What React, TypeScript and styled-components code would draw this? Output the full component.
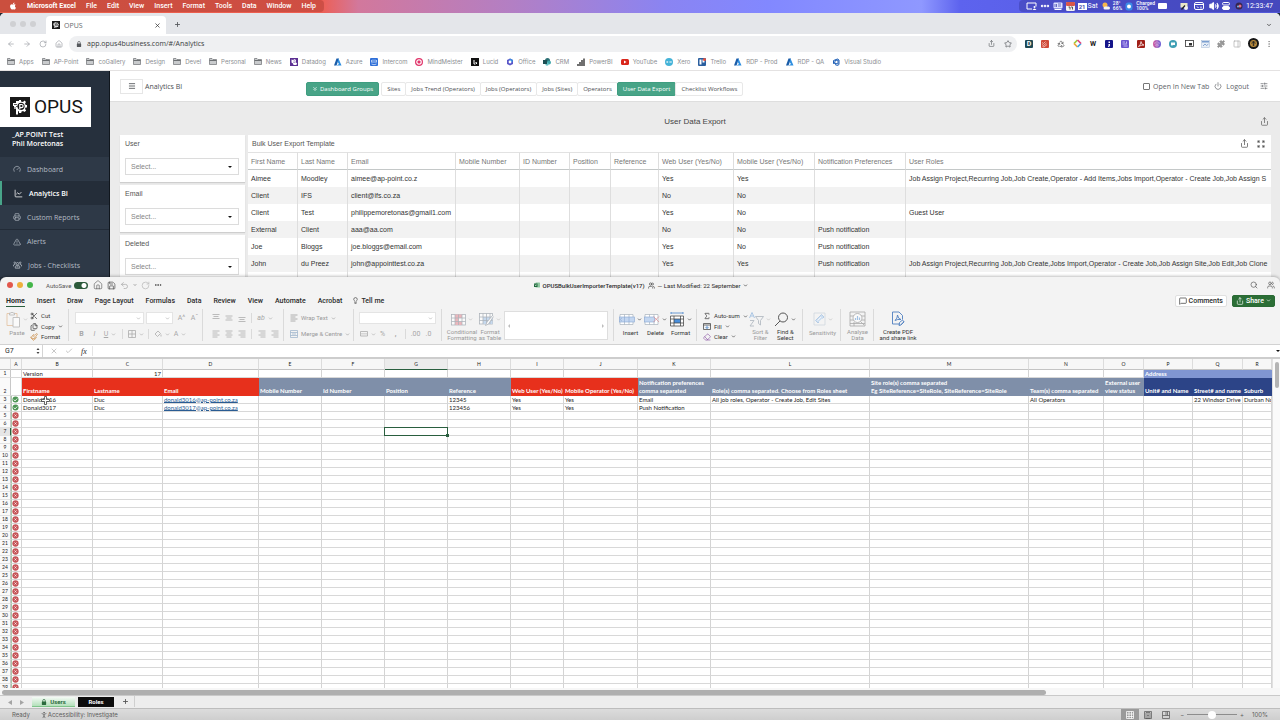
import React from "react";
import styled, { createGlobalStyle, css } from "styled-components";
import {
  ArrowLeft, ArrowRight, RotateCw, House, Star, Share, Puzzle, PanelRight, EllipsisVertical,
  Menu, Power, SlidersHorizontal, ChevronDown, ChevronsDown, Search, Scissors, ChartLine, Printer,
  TriangleAlert, Users, Gauge, Lightbulb, Undo2, Plus, X, Check, MessageSquare, Sigma, Eraser,
  Recycle, Volume2, PersonStanding, Paintbrush, Files, Ellipsis, Save,
} from "lucide-react";
import { FaApple } from "react-icons/fa";

const ui = `Roboto, "Liberation Sans", sans-serif`;
const web = `"Open Sans", "Noto Sans", sans-serif`;
const helv = `"Liberation Sans", Arial, sans-serif`;
const calibri = `Lato, "Open Sans", sans-serif`;

const Global = createGlobalStyle`
  *, *::before, *::after { box-sizing: border-box; }
  html, body, #root { height: 100%; }
  body { margin: 0; overflow: hidden; background: #1f2a36; font-family: ${ui}; }
  button, input, select { font: inherit; color: inherit; border: 0; background: none; padding: 0; margin: 0; border-radius: 0; }
  a { color: inherit; text-decoration: none; }
  svg { display: block; flex: none; }
  h1, h2, p { margin: 0; font: inherit; }
`;

const Desktop = styled.div`
  display: flex;
  flex-direction: column;
  height: 100vh;
  min-height: 400px;
`;

/* ---------- macOS menu bar ---------- */

const MenuBar = styled.header`
  display: flex;
  justify-content: space-between;
  height: 13px;
  flex: none;
  color: #fff;
  font-size: 7px;
  line-height: 12px;
  background: linear-gradient(90deg, #e8604a 0%, #ee5e52 25%, #d2789c 28%, #b37fc4 40%, #8a84f2 52%, #8288ff 60%, #8f98ff 72%, #5d63ee 75%, #5258d8 100%);
`;
const AppMenus = styled.nav`
  display: flex;
  gap: 10px;
  padding: 0 8px 0 9px;
  height: 12px;
  border-radius: 0 4px 4px 0;
  background: rgba(150, 50, 40, 0.35);
  font-weight: 500;
  b { font-weight: 700; }
  svg { margin-top: 2px; }
`;
const StatusMenus = styled.div`
  display: flex;
  align-items: center;
  gap: 3px;
  padding: 0 7px;
  height: 12px;
  border-radius: 4px 0 0 4px;
  background: rgba(50, 50, 150, 0.4);
`;
const TinyStack = styled.span`
  display: block;
  font-size: 5px;
  line-height: 5px;
  font-weight: 500;
`;
const DateChip = styled.span`
  display: flex;
  align-items: center;
  gap: 1px;
  line-height: 8px;
  b { background: #fff; color: #4a50b0; font-size: 6px; line-height: 7px; padding: 0 1px; }
`;

/* ---------- Browser ---------- */

const Browser = styled.section`
  display: flex;
  flex-direction: column;
  height: 270px;
  flex: none;
  overflow: hidden;
  border-radius: 5px 5px 0 0;
  background: #fff;
`;
const TabStrip = styled.div`
  display: flex;
  align-items: flex-end;
  height: 21px;
  flex: none;
  padding: 0 8px 0 10px;
  background: #e4e6ea;
`;
const Lights = styled.div`
  display: flex;
  align-self: center;
  gap: 4px;
`;
const Light = styled.button<{ $c: string }>`
  width: 6px;
  height: 6px;
  border-radius: 50%;
  background: ${(p) => p.$c};
`;
const BrowserTab = styled.div`
  display: flex;
  align-items: center;
  gap: 4px;
  width: 120px;
  height: 18px;
  margin-left: 10px;
  padding: 0 5px 0 6px;
  border-radius: 4px 4px 0 0;
  background: #fff;
  color: #66696d;
  font: 7px ${web};
  button { margin-left: auto; }
`;
const NewTab = styled.button`
  margin: 0 auto 6px 8px;
  color: #55585c;
`;
const TabSearch = styled.button`
  margin-bottom: 6px;
  color: #333;
`;
const NavRow = styled.div`
  display: flex;
  align-items: center;
  height: 19px;
  flex: none;
  padding: 0 3px;
`;
const NavButtons = styled.div`
  display: flex;
  gap: 8px;
  width: 66px;
  padding-left: 4px;
  color: #9b9fa4;
`;
const Omnibox = styled.div`
  display: flex;
  align-items: center;
  gap: 5px;
  flex: 1;
  height: 16px;
  padding: 0 4px 0 7px;
  border-radius: 8px;
  background: #eff0f2;
  color: #55585c;
  input { flex: 1; min-width: 0; font: 7px ${web}; color: #3a3d40; outline: none; }
  button { width: 11px; display: grid; place-items: center; }
`;
const Extensions = styled.div`
  display: grid;
  grid-auto-flow: column;
  grid-auto-columns: 16px;
  margin-left: 4px;
  button { display: grid; place-items: center; height: 16px; color: #888; }
`;
const ExtTile = styled.span<{ $bg: string; $fg?: string; $round?: boolean }>`
  display: block;
  width: 8px;
  height: 8px;
  border-radius: ${(p) => (p.$round ? "50%" : "1px")};
  background: ${(p) => p.$bg};
  color: ${(p) => p.$fg || "#fff"};
  font-size: 7px;
  font-weight: 700;
  line-height: 8px;
  text-align: center;
`;
const Avatar = styled.span`
  display: grid;
  place-items: center;
  width: 11px;
  height: 11px;
  border-radius: 50%;
  border: 2px solid #151515;
  background: #b98a3a;
`;
const Bookmarks = styled.nav`
  display: flex;
  align-items: center;
  gap: 8px;
  height: 18px;
  flex: none;
  padding: 0 7px;
  border-bottom: 1px solid #e4e2e2;
  color: #8b8e92;
  font: 6px Inter, ${ui};
  white-space: nowrap;
  a { display: flex; align-items: center; gap: 4px; }
`;

/* ---------- Web application ---------- */

const WebApp = styled.div`
  display: flex;
  flex: 1;
  min-height: 0;
`;
const Sidebar = styled.aside`
  width: 110px;
  flex: none;
  padding-top: 16px;
  border-right: 1px solid #10161d;
  background: #26303d;
  font-family: ${web};
`;
const Brand = styled.div`
  display: flex;
  align-items: center;
  gap: 4px;
  width: 91px;
  height: 40px;
  padding-left: 10px;
  background: #fff;
  color: #151515;
  font: 19px/40px ${ui};
`;
const Account = styled.div`
  height: 30px;
  padding: 3px 0 0 12px;
  color: #fff;
  font-size: 7px;
  line-height: 9px;
  font-weight: 600;
`;
const SideLink = styled.a<{ $active?: boolean; $sep?: boolean }>`
  display: flex;
  align-items: center;
  gap: 6px;
  height: 24px;
  padding-left: ${(p) => (p.$active ? "12px" : "13px")};
  border-left: ${(p) => (p.$active ? "2px solid #48a489" : "0")};
  border-top: ${(p) => (p.$sep ? "1px solid #222b37" : "0")};
  background: ${(p) => (p.$active ? "#242d39" : "#2e3947")};
  color: ${(p) => (p.$active ? "#fff" : "#b4bbc4")};
  font-size: 7px;
  font-weight: ${(p) => (p.$active ? 600 : 500)};
`;
const Main = styled.main`
  display: flex;
  flex-direction: column;
  flex: 1;
  min-width: 0;
  background: #ebebeb;
`;
const TopBar = styled.div`
  display: flex;
  align-items: center;
  height: 31px;
  flex: none;
  padding: 0 12px 0 10px;
  border-bottom: 1px solid #dedede;
  background: #fff;
  color: #4c4f53;
  font-family: ${web};
`;
const TopTitle = styled.div`
  display: flex;
  align-items: center;
  gap: 2px;
  width: 186px;
  font-size: 7px;
  font-weight: 500;
`;
const MenuToggle = styled.button`
  display: grid;
  place-items: center;
  width: 23px;
  height: 15px;
  border: 1px solid #e6e6e6;
`;
const Dashboards = styled.nav`
  display: flex;
  margin-top: 5px;
  font-size: 6px;
`;
const DashButton = styled.button<{ $on?: boolean; $lead?: boolean }>`
  display: flex;
  align-items: center;
  gap: 2px;
  height: 14px;
  padding: 0 5px;
  margin: 0 ${(p) => (p.$lead ? "2px" : "-1px")} 0 0;
  border: 1px solid ${(p) => (p.$on ? "#3f9d80" : "#e8e8e8")};
  border-radius: 2px;
  background: ${(p) => (p.$on ? "#48a487" : "#fff")};
  color: ${(p) => (p.$on ? "#fff" : "#4c4f53")};
  font-weight: ${(p) => (p.$on ? 500 : 400)};
  white-space: nowrap;
`;
const TopRight = styled.div`
  display: flex;
  align-items: center;
  gap: 5px;
  margin-left: auto;
  font-size: 7px;
  color: #606368;
  label { display: flex; align-items: center; gap: 3px; }
  input { appearance: none; width: 7px; height: 7px; border: 1px solid #777; border-radius: 1px; background: #fff; }
  a { display: flex; align-items: center; gap: 4px; }
  button { margin-left: 6px; }
`;
const PageTitle = styled.div`
  display: grid;
  grid-template-columns: 1fr auto 1fr;
  align-items: center;
  height: 33px;
  padding: 6px 11px 0;
  flex: none;
  color: #444;
  font: 8px ${helv};
  button { grid-column: 3; justify-self: end; color: #666; }
  h1 { grid-column: 2; }
`;
const Board = styled.div`
  display: flex;
  gap: 3px;
  flex: 1;
  min-height: 0;
  padding: 0 9px 0 10px;
  color: #555;
  font: 7px ${helv};
`;
const Filters = styled.div`
  display: flex;
  flex-direction: column;
  gap: 3px;
  width: 125px;
  flex: none;
`;
const Filter = styled.div`
  height: 47px;
  flex: none;
  padding: 5px 6px 0 5px;
  background: #fff;
  box-shadow: 0 1px 1px rgba(0, 0, 0, 0.12);
  line-height: 8px;
`;
const SelectBox = styled.div`
  display: flex;
  align-items: center;
  height: 17px;
  margin-top: 10px;
  padding: 0 6px 0 5px;
  border: 1px solid #dcdcdc;
  select { flex: 1; appearance: none; color: #858585; outline: none; }
`;
const Caret = styled.span`
  border: 2px solid transparent;
  border-top-color: #111;
  border-bottom: 0;
`;
const ExportCard = styled.section`
  flex: 1;
  min-width: 0;
  overflow: hidden;
  background: #fff;
`;
const CardHead = styled.div`
  display: flex;
  align-items: center;
  gap: 8px;
  height: 17px;
  padding: 0 6px 0 4px;
  h2 { flex: 1; }
  button { color: #555; }
`;
const DataTable = styled.table`
  width: 100%;
  table-layout: fixed;
  border-collapse: separate;
  border-spacing: 0;
  th, td {
    height: 17px;
    padding: 0 0 0 3px;
    border-right: 1px solid #dedede;
    text-align: left;
    font-weight: 400;
    white-space: nowrap;
    overflow: hidden;
  }
  th { height: 18px; border-top: 1px solid #e2e2e2; border-bottom: 1px solid #c4c8c8; color: #777; }
  td { color: #333; }
  th:last-child, td:last-child { border-right: 0; }
  tbody tr:nth-child(even) { background: #f2f2f2; }
`;

/* ---------- Excel ---------- */

const Excel = styled.section`
  position: relative;
  display: flex;
  flex-direction: column;
  flex: 1;
  min-height: 0;
  margin-top: -6px;
  border-radius: 6px 6px 0 0;
  background: #f3f3f3;
  box-shadow: 0 -1px 3px rgba(0, 0, 0, 0.25);
  color: #2b2b2b;
`;
const TitleBar = styled.div`
  display: grid;
  grid-template-columns: 1fr auto 1fr;
  align-items: center;
  height: 16px;
  flex: none;
  padding: 0 5px 0 7px;
  font-size: 6px;
`;
const QuickTools = styled.div`
  display: flex;
  align-items: center;
  gap: 4px;
  color: #555;
`;
const WindowTools = styled.div`
  display: flex;
  justify-content: flex-end;
  gap: 9px;
  color: #555;
`;
const AutoSave = styled.label`
  display: flex;
  align-items: center;
  gap: 3px;
  margin: 0 1px 0 9px;
  input {
    appearance: none;
    width: 14px;
    height: 7px;
    border-radius: 4px;
    background: radial-gradient(circle at 10px 50%, #fff 2px, transparent 3px) #2c5a3b;
  }
`;
const DocName = styled.h1`
  display: flex;
  align-items: center;
  gap: 3px;
  b { font-weight: 500; }
`;
const RibbonTabs = styled.nav`
  display: flex;
  align-items: center;
  gap: 12px;
  height: 15px;
  flex: none;
  padding: 0 5px 0 6px;
  font-size: 7px;
  font-weight: 500;
`;
const RibbonTab = styled.button<{ $on?: boolean }>`
  height: 13px;
  padding-top: 1px;
  border-bottom: 1px solid ${(p) => (p.$on ? "#2a5f3f" : "transparent")};
  font-weight: ${(p) => (p.$on ? 700 : 500)};
  white-space: nowrap;
`;
const TellMe = styled.button`
  display: flex;
  align-items: center;
  gap: 2px;
  margin-left: -2px;
  font-weight: 500;
`;
const TabActions = styled.div`
  display: flex;
  gap: 5px;
  margin-left: auto;
`;
const Pill = styled.button<{ $green?: boolean }>`
  display: flex;
  align-items: center;
  gap: 2px;
  height: 12px;
  padding: 0 3px;
  border: 1px solid ${(p) => (p.$green ? "#2a6a34" : "#e0e0e0")};
  border-radius: 2px;
  background: ${(p) => (p.$green ? "#2b6e36" : "#fff")};
  color: ${(p) => (p.$green ? "#fff" : "#2b2b2b")};
`;
const Ribbon = styled.div`
  display: flex;
  height: 37px;
  flex: none;
  border-bottom: 1px solid #d2d2d2;
  font-size: 6px;
  line-height: 6px;
`;
const Group = styled.div<{ $w: number; $pad?: number }>`
  display: flex;
  width: ${(p) => p.$w}px;
  flex: none;
  height: 32px;
  margin-top: 1px;
  padding: 2px 0 0 ${(p) => p.$pad ?? 6}px;
  border-right: 1px solid #dadada;
  &:last-child { border-right: 0; }
`;
const Stack = styled.div<{ $gap?: number }>`
  display: flex;
  flex-direction: column;
  gap: ${(p) => p.$gap ?? 0}px;
`;
const ToolRow = styled.div`
  display: flex;
  align-items: center;
  height: 14px;
  color: #a8a8a8;
`;
const Tool = styled.button<{ $w?: number }>`
  display: flex;
  align-items: center;
  justify-content: center;
  gap: 3px;
  width: ${(p) => p.$w ?? 13}px;
  height: 12px;
  flex: none;
  font-size: 7px;
`;
const Rule = styled.span`
  width: 1px;
  height: 10px;
  margin: 0 3px;
  background: #dadada;
`;
const ComboBox = styled.div<{ $w: number }>`
  display: flex;
  align-items: center;
  width: ${(p) => p.$w}px;
  height: 12px;
  margin-right: 2px;
  padding-right: 2px;
  border: 1px solid #e4e4e4;
  background: #fff;
  input { flex: 1; min-width: 0; }
`;
const BigTool = styled.button<{ $w: number; $dim?: boolean }>`
  display: flex;
  flex-direction: column;
  align-items: center;
  width: ${(p) => p.$w}px;
  flex: none;
  white-space: nowrap;
  color: ${(p) => (p.$dim ? "#999" : "#333")};
  > span:first-child { display: flex; align-items: center; gap: 2px; height: 17px; margin-bottom: 2px; opacity: ${(p) => (p.$dim ? 0.6 : 1)}; }
`;
const LineTool = styled.button<{ $dim?: boolean; $h?: number }>`
  display: flex;
  align-items: center;
  gap: 3px;
  height: ${(p) => p.$h ?? 11}px;
  white-space: nowrap;
  color: ${(p) => (p.$dim ? "#999" : "#333")};
`;
const Gallery = styled.div`
  display: flex;
  align-items: center;
  justify-content: space-between;
  width: 104px;
  height: 29px;
  padding: 0 3px;
  border: 1px solid #dedede;
  background: #fff;
  color: #bbb;
`;
const FormulaBar = styled.div`
  display: flex;
  align-items: center;
  height: 14px;
  flex: none;
  border-bottom: 2px solid #cdcdcd;
  background: #fff;
  font-size: 7px;
  > svg { margin-left: 7px; color: #aaa; }
  i { margin: 0 5px 0 8px; font-family: "Liberation Serif", serif; font-size: 8px; }
`;
const NameBox = styled.div`
  display: flex;
  align-items: center;
  width: 43px;
  height: 12px;
  padding: 0 2px 0 5px;
  border: 1px solid #d4d4d4;
  border-width: 0 1px 0 0;
  input { flex: 1; min-width: 0; }
`;
const FormulaInput = styled.input`
  && {
    flex: 1;
    height: 10px;
    border-left: 1px solid #e4e4e4;
  }
`;
const SheetArea = styled.div`
  display: flex;
  flex: 1;
  min-height: 0;
  overflow: hidden;
  background: #fff;
`;
const SheetClip = styled.div`
  flex: 1;
  min-width: 0;
  overflow: hidden;
`;
const VScroll = styled.div`
  width: 8px;
  flex: none;
  padding: 3px 1px 0 2px;
  border-left: 1px solid #e0e0e0;
  background: #fafafa;
  &::before { content: ""; display: block; height: 26px; border-radius: 3px; background: #b4b4b4; }
`;
const Sheet = styled.table`
  width: 100%;
  table-layout: fixed;
  border-collapse: separate;
  border-spacing: 0;
  font: 6px/7px ${calibri};
  color: #222;
`;
const ColHead = styled.th<{ $sel?: boolean }>`
  height: 11px;
  padding: 0;
  border-right: 1px solid #dcdcdc;
  border-bottom: 1px solid ${(p) => (p.$sel ? "#2a5f3f" : "#c4c4c4")};
  background: ${(p) => (p.$sel ? "#ececec" : "#f7f7f7")};
  font-size: 5px;
  font-weight: 400;
`;
const RowHead = styled.th<{ $sel?: boolean; $bottom?: boolean }>`
  padding: 0;
  border-right: 1px solid ${(p) => (p.$sel ? "#2a5f3f" : "#c8c8c8")};
  border-bottom: 1px solid #e2e2e2;
  background: ${(p) => (p.$sel ? "#e6e6e6" : "#fafafa")};
  font-size: 5px;
  font-weight: 400;
  vertical-align: ${(p) => (p.$bottom ? "bottom" : "middle")};
`;
const fills = {
  red: "#e7301c",
  slate: "#7f8fa9",
  navy: "#2c4487",
  sky: "#8096d2",
};
type Fill = keyof typeof fills;
const Cell = styled.td<{ $fill?: Fill; $right?: boolean; $sel?: boolean }>`
  height: 8px;
  padding: 0 1px;
  border-right: 1px solid #d4d4d4;
  border-bottom: 1px solid #d8d8d8;
  text-align: ${(p) => (p.$right ? "right" : "left")};
  white-space: nowrap;
  overflow: hidden;
  a { color: #2a5c93; text-decoration: underline; text-underline-offset: 0; }
  ${(p) => p.$fill && css`
    background: ${fills[p.$fill]};
    border-color: ${fills[p.$fill]};
    color: #fff;
    font-weight: 700;
  `}
  ${(p) => p.$sel && css`
    position: relative;
    overflow: visible;
    &::after { content: ""; position: absolute; inset: -1px; border: 1px solid #2a5f3f; }
    &::before { content: ""; position: absolute; right: -2px; bottom: -2px; width: 3px; height: 3px; background: #2a5f3f; }
  `}
`;
const HeadCell = styled(Cell)`
  height: 18px;
  padding-right: 0;
  vertical-align: bottom;
  line-height: 8px;
  white-space: pre;
`;
const ShortCell = styled(Cell)`
  height: 7px;
  line-height: 6px;
`;
const MarkCell = styled(Cell)`
  padding: 0;
  border-left: 1px solid #a9c6a9;
`;
const HoverPointer = styled.span`
  position: absolute;
  left: 41px;
  top: 119px;
`;
const HScroll = styled.div`
  height: 8px;
  flex: none;
  padding: 2px calc(18% + 4px) 0 2px;
  border-bottom: 1px solid #c9c9c9;
  background: #f7f7f7;
  &::before { content: ""; display: block; height: 5px; border-radius: 3px; background: #afafaf; }
`;
const SheetTabs = styled.div`
  display: flex;
  align-items: flex-start;
  height: 12px;
  flex: none;
  padding-left: 8px;
  background: #ededed;
  font-size: 6px;
  color: #999;
`;
const SheetNav = styled.div`
  display: flex;
  gap: 8px;
  width: 24px;
  padding-top: 4px;
`;
const SheetTab = styled.button<{ $dark?: boolean }>`
  display: flex;
  align-items: center;
  justify-content: center;
  gap: 3px;
  width: ${(p) => (p.$dark ? 36 : 43)}px;
  height: 10px;
  margin-right: 3px;
  margin-top: 1px;
  border-bottom: 1px solid ${(p) => (p.$dark ? "#111" : "#7fc48b")};
  background: ${(p) => (p.$dark ? "#0d0d0d" : "linear-gradient(#f4faf5, #b4e0bb)")};
  color: ${(p) => (p.$dark ? "#fff" : "#2a6a3c")};
  font-weight: 700;
`;
const AddSheet = styled.button`
  display: grid;
  place-items: center;
  width: 18px;
  height: 11px;
  border-right: 1px solid #cfcfcf;
  color: #555;
`;
const StatusBar = styled.footer`
  display: flex;
  align-items: center;
  height: 12px;
  flex: none;
  padding: 0 12px;
  border-top: 1px solid #bdbdbd;
  background: linear-gradient(#dcdcdc, #cecece);
  color: #5c5c5c;
  font: 6px Inter, ${ui};
  span { margin-right: 10px; }
`;
const ViewButtons = styled.div`
  display: flex;
  margin-left: auto;
  height: 11px;
  button { display: grid; place-items: center; width: 18px; }
  button:first-child { background: #9a9a9a; color: #fff; }
`;
const Zoom = styled.label`
  display: flex;
  align-items: center;
  gap: 3px;
  margin-left: 5px;
  input { appearance: none; width: 50px; height: 9px; background: linear-gradient(#8d8d8d, #8d8d8d) center / 100% 1px no-repeat; }
  input::-webkit-slider-thumb { appearance: none; width: 8px; height: 8px; border-radius: 50%; background: #fff; }
  output { margin-left: 5px; }
`;

/* ---------- Small drawings ---------- */

const Drop = ({ size = 5, w = 3 }: { size?: number; w?: number }) => <ChevronDown size={size} strokeWidth={w} />;

const LockMark = ({ size = 7 }: { size?: number }) => (
  <svg width={size} height={size} viewBox="0 0 14 14"><rect x="2" y="6" width="10" height="8" rx="1" fill="currentColor" /><path d="M4 7V4q0-3 3-3t3 3v3" fill="none" stroke="currentColor" strokeWidth="1.600" /></svg>
);
const FolderMark = () => (
  <svg width="8" height="7" viewBox="0 0 16 14">
    <path d="M1 1h5l2 2h7v10H1z" fill="#c9cbcd" stroke="#6d7073" strokeWidth="1.400" />
    <path d="M1 5h14" stroke="#6d7073" strokeWidth="2" />
  </svg>
);
const AzureMark = () => (
  <svg width="8" height="8" viewBox="0 0 16 16">
    <path d="M5 1h5L5 15H0z" fill="#1a5ca8" />
    <path d="M9 1l6 14H5l5-3-3-4z" fill="#2f8fe0" />
  </svg>
);
const OpusMark = ({ size }: { size: number }) => (
  <svg width={size} height={size} viewBox="0 0 20 20">
    <rect width="20" height="20" fill="#191919" />
    <path d="M3 6h3V4h3V3h2v1.500l2 .5 1.500-1.500L16 5l-1 1.500.7 1.500H17v2.500h-1.400L15 12l1.200 1.500-1.700 1.600-1.500-1-1.700.7V16H9v-1.500L8 14v3.500H6V12H4V9H3z" fill="#fff" />
    <circle cx="11" cy="9.300" r="3.600" fill="#191919" />
    <path d="M9.800 12.500V7.500h1.700a1.500 1.500 0 0 1 0 3.200H10" fill="none" stroke="#fff" strokeWidth="1.200" />
    <path d="M4 7.500h3M6 9.500h1.500M5 12v-2" stroke="#191919" strokeWidth="0.700" />
  </svg>
);
const marks: Record<string, React.ReactNode> = {
  datadog: (
    <svg width="8" height="8" viewBox="0 0 16 16"><rect width="16" height="16" fill="#5c2f92" /><path d="M3 3l3 1 4-2 2 3-1 4 3 1-1 4-6 0-1-3-3-2z" fill="#fff" /><path d="M6 6h1M9 5h1M7 9l3-1" stroke="#5c2f92" strokeWidth="1.400" /></svg>
  ),
  azure: <AzureMark />,
  intercom: (
    <svg width="8" height="8" viewBox="0 0 16 16"><rect width="16" height="16" rx="2" fill="#2f6fd8" /><path d="M3 4v5M6 3v7M10 3v7M13 4v5M3 12q5 3 10 0" stroke="#fff" strokeWidth="1.300" fill="none" /></svg>
  ),
  mind: (
    <svg width="8" height="8" viewBox="0 0 16 16"><circle cx="8" cy="8" r="6.800" fill="#fff" stroke="#e0356a" strokeWidth="2.400" /><rect x="5" y="5" width="6" height="6" rx="2" fill="#e0356a" /></svg>
  ),
  lucid: (
    <svg width="8" height="8" viewBox="0 0 16 16"><rect width="16" height="16" fill="#111" /><path d="M6 4v8h3M9 9h2v3" stroke="#fff" strokeWidth="2" fill="none" /></svg>
  ),
  office: (
    <svg width="8" height="8" viewBox="0 0 16 16"><path d="M8 1l6 3v8l-6 3-6-3V4z" fill="#5a56c8" /><path d="M8 1l6 3-2 5-6-4z" fill="#3a8be0" /><circle cx="8" cy="8" r="2.800" fill="#fff" /></svg>
  ),
  crm: (
    <svg width="8" height="8" viewBox="0 0 16 16"><circle cx="9" cy="5" r="5" fill="#2c6f74" /><circle cx="12" cy="9" r="4" fill="#3fa7ac" /><circle cx="8" cy="12" r="3.500" fill="#68c1c4" /><rect y="4" width="8" height="8" fill="#1d4f54" /></svg>
  ),
  power: (
    <svg width="8" height="8" viewBox="0 0 16 16"><path d="M2 16v-4M6 16V8M10 16V4M14 16V1" stroke="#222" strokeWidth="2.600" /></svg>
  ),
  youtube: (
    <svg width="8" height="6" viewBox="0 0 16 12"><rect width="16" height="12" rx="3" fill="#d9261c" /><path d="M6 3l5 3-5 3z" fill="#fff" /></svg>
  ),
  xero: (
    <svg width="8" height="8" viewBox="0 0 16 16"><circle cx="8" cy="8" r="8" fill="#44b3d8" /><path d="M3 6l3 4M6 6l-3 4M8 8h3" stroke="#fff" strokeWidth="1.200" /><circle cx="12" cy="8" r="1.500" fill="#fff" /></svg>
  ),
  trello: (
    <svg width="8" height="8" viewBox="0 0 16 16"><rect width="16" height="16" rx="2" fill="#2a5e9e" /><rect x="3" y="3" width="4" height="10" fill="#fff" /><rect x="9" y="3" width="4" height="6" fill="#fff" /><circle cx="13" cy="3" r="3" fill="#e2503f" /></svg>
  ),
  devops: (
    <svg width="8" height="8" viewBox="0 0 16 16"><path d="M3 5l8-3 3 2v9l-3 2-5-2M3 5v6l3-2V5l6-1v8l-9-2" fill="none" stroke="#1f5fb5" strokeWidth="2" /></svg>
  ),
};

const bookmarks: [string, string][] = [
  ["Apps", ""], ["AP-Point", ""], ["coGallery", ""], ["Design", ""], ["Devel", ""], ["Personal", ""], ["News", ""],
  ["Datadog", "datadog"], ["Azure", "azure"], ["Intercom", "intercom"], ["MindMeister", "mind"], ["Lucid", "lucid"],
  ["Office", "office"], ["CRM", "crm"], ["PowerBI", "power"], ["YouTube", "youtube"], ["Xero", "xero"],
  ["Trello", "trello"], ["RDP - Prod", "azure"], ["RDP - QA", "azure"], ["Visual Studio", "devops"],
];

const Lines = ({ rows, x = "c", top = 2 }: { rows: number; x?: string; top?: number }) => (
  <svg width="8" height="8" viewBox="0 0 16 16" stroke="currentColor" strokeWidth="1.500">
    {Array.from({ length: rows }, (_, i) => {
      const short = i % 2 === 1;
      const a = !short || x === "l" ? 1 : x === "c" ? 3 : 5;
      const b = !short || x === "r" ? 15 : x === "c" ? 13 : 11;
      return <path key={i} d={`M${a} ${top + i * 4}H${b}`} />;
    })}
  </svg>
);
const GridMark = () => (
  <svg width="15" height="13" viewBox="0 0 30 26" fill="none" stroke="#7d8894" strokeWidth="1.500">
    <rect x="1" y="3" width="28" height="21" fill="#fff" />
    <path d="M8 3h14v7h-7v7h7v7H8z" fill="#e58f98" stroke="none" />
    <path d="M1 10h28M1 17h28M8 3v21M15 3v21M22 3v21" />
  </svg>
);
const PasteMark = () => (
  <svg width="15" height="17" viewBox="0 0 30 34" fill="#f6f6f6" stroke="#9a9a9a" strokeWidth="1.800">
    <path d="M2 5h20v24H2z" stroke="#dca875" /><path d="M7 8V4h3q2-4 4 0h3v4z" />
    <path d="M14 13h13v19H14z" fill="#fff" />
  </svg>
);
const StyleTableMark = () => (
  <svg width="15" height="15" viewBox="0 0 30 30" fill="none" stroke="#7d8894" strokeWidth="1.500">
    <rect x="1" y="3" width="26" height="21" fill="#fff" /><rect x="8" y="10" width="19" height="14" fill="#a9c8ec" stroke="none" />
    <path d="M1 10h26M1 17h26M8 3v21M15 3v21M22 3v21" /><path d="M28 6L16 20l-3 7 6-3L29 9" fill="#fff" />
  </svg>
);
const InsertMark = ({ del }: { del?: boolean }) => (
  <svg width="16" height="13" viewBox="0 0 32 26" fill="none" stroke="#a3adb8" strokeWidth="1.300">
    <path d="M2 3h26v20H2zM11 3v20M20 3v20" fill="#fff" /><rect x="1" y="8" width={del ? 20 : 30} height="10" fill="#c3d6f0" stroke="#8fabd4" />
    {del ? <path d="M19 7l11 11M30 7L19 18" stroke="#dd969c" strokeWidth="1.600" /> : <path d="M11 8v10M20 8v10M6 10l-4 3 4 3" stroke="#8fabd4" />}
  </svg>
);
const FormatMark = () => (
  <svg width="16" height="15" viewBox="0 0 32 30" fill="none" stroke="#444" strokeWidth="1.500">
    <path d="M4 2h24M4 0v4M28 0v4" stroke="#3f7fc8" /><path d="M3 8h26v20H3z" fill="#fff" /><rect x="10" y="14" width="13" height="8" fill="#4a90dd" stroke="none" />
    <path d="M3 14h26M3 22h26M10 8v20M23 8v20" />
  </svg>
);
const SortMark = () => (
  <svg width="15" height="15" viewBox="0 0 30 30" fill="none" stroke="#8b97a5" strokeWidth="1.800">
    <path d="M1 12L6 1l5 11M3 8h6" stroke="#6ea0d8" /><path d="M2 17h8L2 28h8" /><path d="M13 9h16l-6 8v9l-4-3v-6z" />
  </svg>
);
const SenseMark = () => (
  <svg width="13" height="15" viewBox="0 0 26 30" fill="none" stroke="#7ba7d8" strokeWidth="1.600">
    <path d="M2 2h22v24H2z" stroke="#b9c6d4" /><path d="M5 17L17 5l5 5-12 12z" fill="#b6d2f0" /><path d="M9 17l7-7M12 20l7-7" stroke="#fff" />
  </svg>
);
const AnalyseMark = () => (
  <svg width="17" height="16" viewBox="0 0 34 32" fill="none" stroke="#777" strokeWidth="1.600">
    <path d="M2 2h30v28H2zM2 10h8M2 18h8M2 25h30M10 22v8M24 10h8M24 18h8" fill="#f3f3f3" /><circle cx="17" cy="14" r="9" fill="#fff" /><path d="M13 18v-4M17 18v-8M21 18v-5" stroke="#6ea0d8" strokeWidth="2.400" /><path d="M23 21l7 7" />
  </svg>
);
const PdfMark = () => (
  <svg width="14" height="16" viewBox="0 0 28 32" fill="none" stroke="#4f7fc0" strokeWidth="1.800">
    <path d="M18 26H3V2h13l7 7v8" /><path d="M8 19q5-4 5-11 1 8 7 9-7-1-12 2" /><path d="M17 23l6-5 3 4-6 6-4 1zM20 27l6-6" />
  </svg>
);
const ExcelMark = () => (
  <svg width="6" height="6" viewBox="0 0 12 12"><rect x="3" y="1" width="9" height="10" rx="1" fill="#8fc7a0" /><rect y="3" width="7" height="7" fill="#1f6a3c" /><path d="M2 5l3 3M5 5L2 8" stroke="#fff" /></svg>
);
const OkMark = () => (
  <svg width="7" height="7" viewBox="0 0 14 14"><circle cx="7" cy="7" r="6" fill="#4d9554" /><path d="M3.500 7l2.500 3 4.500-5" stroke="#fff" strokeWidth="1.600" fill="none" /></svg>
);
const BadMark = () => (
  <svg width="7" height="7" viewBox="0 0 14 14"><circle cx="7" cy="7" r="6.300" fill="#c65558" /><path d="M4.800 4.800l4.400 4.400M9.200 4.800l-4.400 4.400" stroke="#fff" strokeWidth="1.300" /></svg>
);
const ExpandMark = () => (
  <svg width="8" height="8" viewBox="0 0 16 16" fill="#555"><path d="M1 1h5L4.500 2.500 6 4 4 6 2.500 4.500 1 6zM15 1v5l-1.500-1.500L12 6l-2-2 1.500-1.500L10 1zM1 15v-5l1.500 1.500L4 10l2 2-1.500 1.500L6 15zM15 15h-5l1.500-1.500L10 12l2-2 1.500 1.500L15 10z" /></svg>
);
const TeamMark = () => (
  <svg width="9" height="8" viewBox="0 0 20 16" fill="none" stroke="currentColor" strokeWidth="1.800">
    <circle cx="10" cy="5" r="2.500" /><circle cx="4" cy="3" r="1.700" /><circle cx="16" cy="3" r="1.700" /><path d="M5 15v-3q0-3 5-3t5 3v3zM1 11V8q1-2 4-1M19 11V8q-1-2-4-1" /><path d="M8 12h4" />
  </svg>
);
const Triangle = ({ left }: { left?: boolean }) => (
  <svg width="4" height="5" viewBox="0 0 8 10"><path d={left ? "M8 0v10L0 5z" : "M0 0v10l8-5z"} fill="#a5a5a5" /></svg>
);
const SmallArrow = ({ left }: { left?: boolean }) => (
  <svg width="2" height="4" viewBox="0 0 4 8"><path d={left ? "M4 0v8L0 4z" : "M0 0v8l4-4z"} fill="#bdbdbd" /></svg>
);

/* ---------- Data ---------- */

const exportCols: [string, number?][] = [
  ["First Name", 50], ["Last Name", 50], ["Email", 108], ["Mobile Number", 64], ["ID Number", 50], ["Position", 41],
  ["Reference", 48], ["Web User (Yes/No)", 75], ["Mobile User (Yes/No)", 81], ["Notification Preferences", 91], ["User Roles"],
];
const exportRows = [
  ["Aimee", "Moodley", "aimee@ap-point.co.z", "", "", "", "", "Yes", "Yes", "", "Job Assign Project,Recurring Job,Job Create,Operator - Add Items,Jobs Import,Operator - Create Job,Job Assign S"],
  ["Client", "IFS", "client@ifs.co.za", "", "", "", "", "No", "No", "", ""],
  ["Client", "Test", "philippemoretonas@gmail1.com", "", "", "", "", "Yes", "No", "", "Guest User"],
  ["External", "Client", "aaa@aa.com", "", "", "", "", "No", "No", "Push notification", ""],
  ["Joe", "Bloggs", "joe.bloggs@email.com", "", "", "", "", "Yes", "No", "Push notification", ""],
  ["John", "du Preez", "john@appointtest.co.za", "", "", "", "", "Yes", "Yes", "Push notification", "Job Assign Project,Recurring Job,Job Create,Jobs Import,Operator - Create Job,Job Assign Site,Job Edit,Job Clone"],
  ["", "", "", "", "", "", "", "", "", "", ""],
];

const sheetCols: [string, number?][] = [
  ["A", 11], ["B", 71], ["C", 70], ["D", 96], ["E", 63], ["F", 63], ["G", 63], ["H", 63], ["I", 53], ["J", 74],
  ["K", 73], ["L", 159], ["M", 159], ["N", 75], ["O", 40], ["P", 49], ["Q", 50], ["R"],
];
const heads: [string, Fill?][] = [
  [""], ["Firstname", "red"], ["Lastname", "red"], ["Email", "red"], ["Mobile Number", "slate"], ["Id Number", "slate"],
  ["Position", "slate"], ["Reference", "slate"], ["Web User (Yes/No)", "red"], ["Mobile Operator (Yes/No)", "red"],
  ["Notification preferences\ncomma separated", "slate"], ["Role(s) comma separated. Choose from Roles sheet", "slate"],
  ["Site role(s) comma separated\nEg SiteReference=SiteRole, SiteReference=SiteRole", "slate"],
  ["Team(s) comma separated", "slate"], ["External user\nview status", "slate"], ["Unit# and Name", "navy"],
  ["Street# and name", "navy"], ["Suburb", "navy"],
];
const people: Record<number, Record<string, string>> = {
  3: { B: "Donald3016", C: "Duc", D: "donald3016@ap-point.co.za", H: "12345", I: "Yes", J: "Yes", K: "Email", L: "All job roles, Operator - Create Job, Edit Sites", N: "All Operators", Q: "22 Windsor Drive", R: "Durban Nort" },
  4: { B: "Donald3017", C: "Duc", D: "donald3017@ap-point.co.za", H: "123456", I: "Yes", J: "Yes", K: "Push Notification" },
};

/* ---------- Sections ---------- */

const MacMenu = () => (
  <MenuBar>
    <AppMenus aria-label="Application menu">
      <FaApple size={8} />
      <b>Microsoft Excel</b>
      {["File", "Edit", "View", "Insert", "Format", "Tools", "Data", "Window", "Help"].map((m) => <button key={m}>{m}</button>)}
    </AppMenus>
    <StatusMenus>
      <svg width="11" height="8" viewBox="0 0 22 16"><path d="M2 2h18v7M2 2v12h10" fill="none" stroke="#fff" strokeWidth="2" /><circle cx="17" cy="10" r="2" fill="#fff" /><path d="M13 16q4-6 8 0z" fill="#fff" /></svg>
      <Ellipsis size={10} strokeWidth={4} />
      <svg width="10" height="8" viewBox="0 0 20 16"><rect x="1" y="1" width="18" height="12" rx="2" fill="#dfe1ff" /><path d="M4 4v6M7 4v6M10 4h6M10 8h6" stroke="#4a50b0" strokeWidth="1.600" /><path d="M3 15h14" stroke="#fff" strokeWidth="2" /></svg>
      <svg width="9" height="9" viewBox="0 0 18 18"><rect width="18" height="18" rx="3" fill="#f2f2f2" /><rect width="18" height="8" rx="2" fill="#d8564a" /><path d="M5 10h3v5M10 10h3v5" stroke="#333" strokeWidth="1.600" fill="none" /></svg>
      <DateChip><b>21</b>Sat</DateChip>
      <svg width="9" height="8" viewBox="0 0 18 16"><circle cx="8" cy="6" r="5" fill="#f6b64b" /><rect x="5" y="9" width="13" height="6" rx="3" fill="#f3f3f3" /></svg>
      <TinyStack>28°<br />66%</TinyStack>
      <svg width="8" height="9" viewBox="0 0 16 18"><rect x="1" y="1" width="14" height="16" rx="5" fill="#3b8ae6" /><circle cx="8" cy="9" r="4" fill="#fff" /></svg>
      <TinyStack>Charged<br />100%</TinyStack>
      <svg width="18" height="6" viewBox="0 0 36 12"><rect width="18" height="12" rx="2" fill="#fff" /></svg>
      <svg width="10" height="9" viewBox="0 0 20 18"><rect x="3" y="2" width="14" height="9" fill="#e9e6c8" /><circle cx="14" cy="12" r="4" fill="#f2f2f2" /><path d="M5 15l7-8" stroke="#222" strokeWidth="2.400" /></svg>
      <svg width="14" height="8" viewBox="0 0 28 16"><rect x="5" y="1" width="18" height="14" rx="3" fill="none" stroke="#fff" strokeWidth="2" /><path d="M6 5h16M10 9l3 3M18 9v4" stroke="#fff" strokeWidth="2" /></svg>
      <Volume2 size={10} strokeWidth={2.500} fill="#fff" />
      <svg width="8" height="8" viewBox="0 0 16 16" fill="none" stroke="#fff" strokeWidth="2"><rect x="1" y="1" width="14" height="5" rx="2.500" /><rect x="1" y="9" width="14" height="6" rx="3" fill="#fff" /></svg>
      <svg width="10" height="8" viewBox="0 0 20 16"><circle cx="12" cy="8" r="7" fill="#37264f" /><circle cx="14" cy="8" r="3" fill="#e66f8a" /><circle cx="10" cy="9" r="2" fill="#77b6e8" /></svg>
      <span>12:33:47</span>
    </StatusMenus>
  </MenuBar>
);

const BrowserChrome = () => (
  <>
    <TabStrip>
      <Lights>{["Close", "Minimise", "Zoom"].map((l) => <Light key={l} aria-label={l} $c="#cfd0d3" />)}</Lights>
      <BrowserTab><OpusMark size={8} />OPUS<button aria-label="Close tab"><X size={7} strokeWidth={2.500} color="#333" /></button></BrowserTab>
      <NewTab aria-label="New tab"><Plus size={7} strokeWidth={3} /></NewTab>
      <TabSearch aria-label="Search tabs"><ChevronDown size={6} strokeWidth={3} /></TabSearch>
    </TabStrip>
    <NavRow>
      <NavButtons>
        <button aria-label="Back"><ArrowLeft size={8} /></button>
        <button aria-label="Forward"><ArrowRight size={8} /></button>
        <button aria-label="Reload"><RotateCw size={8} /></button>
        <button aria-label="Home page"><House size={8} /></button>
      </NavButtons>
      <Omnibox>
        <LockMark size={6} />
        <input aria-label="Address" defaultValue="app.opus4business.com/#/Analytics" />
        <button aria-label="Share page"><Share size={7} /></button>
        <button aria-label="Bookmark page"><Star size={8} /></button>
      </Omnibox>
      <Extensions>
        <button><ExtTile $bg="#1f4a54">D</ExtTile></button>
        <button aria-label="Tasks"><ExtTile $bg="#cf4a38"><svg width="8" height="8" viewBox="0 0 16 16" stroke="#f7d2cc" strokeWidth="1.500" fill="none"><path d="M2 5l3 2 4-4M2 9l3 2 6-5M3 13l3 1 6-5" /></svg></ExtTile></button>
        <button aria-label="Recycle"><Recycle size={8} color="#555" /></button>
        <button aria-label="Colours"><svg width="9" height="9" viewBox="0 0 18 18" fill="none" strokeWidth="3.500"><path d="M9 2L2 9" stroke="#9acb3c" /><path d="M2 9l7 7" stroke="#f0a63c" /><path d="M9 16l7-7" stroke="#41a6e6" /><path d="M16 9L9 2" stroke="#e2457e" /></svg></button>
        <button><ExtTile $bg="transparent" $fg="#222">W</ExtTile></button>
        <button aria-label="Info"><ExtTile $bg="#15158a"><svg width="8" height="8" viewBox="0 0 16 16" fill="#fff"><rect x="7" y="3" width="3" height="3" /><path d="M7 8h3v3l-2 3H6l1-3z" /></svg></ExtTile></button>
        <button aria-label="Lists"><ExtTile $bg="#6a55cf"><svg width="8" height="8" viewBox="0 0 16 16" stroke="#ddd6ff" strokeWidth="1.500"><path d="M3 4h5M3 8h9M5 12h8M11 3v4" /></svg></ExtTile></button>
        <button aria-label="PDF"><ExtTile $bg="#a01f17"><svg width="8" height="8" viewBox="0 0 16 16" stroke="#fff" strokeWidth="1.400" fill="none"><path d="M3 13q5-4 5-10 1 7 6 7-6 0-11 3" /></svg></ExtTile></button>
        <button aria-label="Assistant"><ExtTile $bg="linear-gradient(90deg,#d45ba0,#6a62d8)" $round><svg width="8" height="8" viewBox="0 0 16 16" stroke="#f3dcf5" fill="none"><path d="M8 1v14M5 4q-3 3 0 4t0 4M11 4q3 3 0 4t0 4" /></svg></ExtTile></button>
        <button aria-label="Chat"><svg width="8" height="8" viewBox="0 0 16 16"><circle cx="8" cy="8" r="8" fill="#3f9fb4" /><path d="M4 5h8v5H8l-3 2v-2H4z" fill="#fff" /></svg></button>
        <button aria-label="Picture in picture"><svg width="9" height="7" viewBox="0 0 18 14"><rect x="1" y="1" width="16" height="12" fill="#fff" stroke="#333" strokeWidth="1.600" /><rect x="8" y="6" width="6" height="5" fill="#333" /></svg></button>
        <button aria-label="Gallery"><svg width="9" height="8" viewBox="0 0 18 16"><rect x="1" y="1" width="16" height="14" fill="#e7eef7" stroke="#9fb6d4" /><rect x="2" y="2" width="14" height="3" fill="#7c9fd0" /><path d="M4 12l4-4 3 3 4-3" stroke="#6a8fc4" fill="none" strokeWidth="1.500" /></svg></button>
        <button aria-label="Extensions"><Puzzle size={8} fill="#9a9a9a" /></button>
        <button aria-label="Side panel"><PanelRight size={8} color="#aaa" /></button>
        <button aria-label="Profile"><Avatar><svg width="7" height="7" viewBox="0 0 14 14" stroke="#222" strokeWidth="1.500" fill="none"><path d="M3 4h8M3 7l4-2 4 2M5 10h4M7 2v10" /></svg></Avatar></button>
        <button aria-label="Browser menu"><EllipsisVertical size={8} /></button>
      </Extensions>
    </NavRow>
    <Bookmarks aria-label="Bookmarks">
      {bookmarks.map(([t, m]) => <a key={t} href="#bookmark">{m ? marks[m] : <FolderMark />}{t}</a>)}
    </Bookmarks>
  </>
);

const OpusApp = () => (
  <WebApp>
    <Sidebar>
      <Brand><OpusMark size={20} />OPUS</Brand>
      <Account><p>_AP.POINT Test</p><p>Phil Moretonas</p></Account>
      <nav>
        <SideLink href="#/Dashboard"><Gauge size={8} />Dashboard</SideLink>
        <SideLink href="#/Analytics" $active><ChartLine size={9} />Analytics BI</SideLink>
        <SideLink href="#/Reports"><Printer size={8} />Custom Reports</SideLink>
        <SideLink href="#/Alerts" $sep><TriangleAlert size={8} />Alerts</SideLink>
        <SideLink href="#/Jobs"><TeamMark />Jobs - Checklists</SideLink>
      </nav>
    </Sidebar>
    <Main>
      <TopBar>
        <TopTitle><MenuToggle aria-label="Toggle menu"><Menu size={8} strokeWidth={2.500} /></MenuToggle>Analytics BI</TopTitle>
        <Dashboards>
          <DashButton $on $lead><ChevronsDown size={6} strokeWidth={3} />Dashboard Groups</DashButton>
          {["Sites", "Jobs Trend (Operators)", "Jobs (Operators)", "Jobs (Sites)", "Operators"].map((t) => <DashButton key={t}>{t}</DashButton>)}
          <DashButton $on>User Data Export</DashButton>
          <DashButton>Checklist Workflows</DashButton>
        </Dashboards>
        <TopRight>
          <label><input type="checkbox" />Open In New Tab</label>
          <a href="#/logout"><Power size={8} />Logout</a>
          <button aria-label="Settings"><SlidersHorizontal size={8} /></button>
        </TopRight>
      </TopBar>
      <PageTitle><h1>User Data Export</h1><button aria-label="Export dashboard"><Share size={9} /></button></PageTitle>
      <Board>
        <Filters>
          {["User", "Email", "Deleted"].map((f) => (
            <Filter key={f}>
              <label htmlFor={f}>{f}</label>
              <SelectBox><select id={f}><option>Select...</option></select><Caret /></SelectBox>
            </Filter>
          ))}
        </Filters>
        <ExportCard>
          <CardHead>
            <h2>Bulk User Export Template</h2>
            <button aria-label="Export table"><Share size={9} /></button>
            <button aria-label="Maximise"><ExpandMark /></button>
          </CardHead>
          <DataTable>
            <colgroup>{exportCols.map(([t, w]) => <col key={t} width={w} />)}</colgroup>
            <thead><tr>{exportCols.map(([t]) => <th key={t}>{t}</th>)}</tr></thead>
            <tbody>{exportRows.map((r, i) => <tr key={i}>{r.map((c, j) => <td key={j}>{c}</td>)}</tr>)}</tbody>
          </DataTable>
        </ExportCard>
      </Board>
    </Main>
  </WebApp>
);

const ExcelRibbon = () => (
  <Ribbon>
    <Group $w={69} $pad={4}>
      <BigTool $w={26} $dim><span><PasteMark /><Drop /></span>Paste</BigTool>
      <Stack>
        <LineTool><Scissors size={8} />Cut</LineTool>
        <LineTool><Files size={8} />Copy<Drop /></LineTool>
        <LineTool $h={9}><Paintbrush size={8} color="#c9873d" />Format</LineTool>
      </Stack>
    </Group>
    <Group $w={134}>
      <Stack $gap={2}>
        <ToolRow>
          <ComboBox $w={69}><input aria-label="Font" /><Drop /></ComboBox>
          <ComboBox $w={27}><input aria-label="Font size" /><Drop /></ComboBox>
          <Tool>A^</Tool><Tool>Aˇ</Tool>
        </ToolRow>
        <ToolRow>
          <Tool><b>B</b></Tool><Tool><em>I</em></Tool><Tool $w={18}><u>U</u><Drop /></Tool><Rule />
          <Tool $w={19}><svg width="8" height="8" viewBox="0 0 16 16" fill="none" stroke="currentColor" strokeWidth="1.500"><path d="M1 1h14v14H1zM8 1v14M1 8h14" /></svg><Drop /></Tool><Rule />
          <Tool $w={19}><svg width="8" height="8" viewBox="0 0 16 16" fill="none" stroke="currentColor" strokeWidth="1.500"><path d="M2 8l6-6 5 5-6 6zM14 9v4" /></svg><Drop /></Tool>
          <Tool $w={18}>A<Drop /></Tool>
        </ToolRow>
      </Stack>
    </Group>
    <Group $w={81}>
      <Stack $gap={2}>
        <ToolRow><Tool><Lines rows={3} top={1} /></Tool><Tool><Lines rows={3} top={4} /></Tool><Tool><Lines rows={3} top={7} /></Tool><Rule /><Tool $w={20}><em>ab</em><Drop /></Tool></ToolRow>
        <ToolRow><Tool><Lines rows={4} x="l" /></Tool><Tool><Lines rows={4} /></Tool><Tool><Lines rows={4} x="r" /></Tool><Rule /><Tool><Lines rows={4} x="r" /></Tool><Tool><Lines rows={4} x="r" /></Tool></ToolRow>
      </Stack>
    </Group>
    <Group $w={70}>
      <Stack $gap={2}>
        <LineTool $dim $h={14}><Lines rows={4} x="l" />Wrap Text<Drop /></LineTool>
        <LineTool $dim $h={14}><svg width="8" height="8" viewBox="0 0 16 16" fill="none" stroke="#9db4cc" strokeWidth="1.500"><path d="M1 1h14v14H1zM1 5h14M1 11h14M4 8h8" /></svg>Merge &amp; Centre<Drop /></LineTool>
      </Stack>
    </Group>
    <Group $w={88} $pad={5}>
      <Stack $gap={2}>
        <ToolRow><ComboBox $w={77}><input aria-label="Number format" /><Drop /></ComboBox></ToolRow>
        <ToolRow><Tool $w={17}><svg width="8" height="6" viewBox="0 0 16 12" fill="none" stroke="currentColor" strokeWidth="1.500"><path d="M1 1h14v9H1zM4 4v3M8 4v3M12 4v3" /></svg><Drop /></Tool><Tool>%</Tool><Tool><b>,</b></Tool><Rule /><Tool>.00</Tool><Tool>.0</Tool></ToolRow>
      </Stack>
    </Group>
    <Group $w={172}>
      <BigTool $w={28} $dim><span><GridMark /><Drop /></span>Conditional<br />Formatting</BigTool>
      <BigTool $w={28} $dim><span><StyleTableMark /><Drop /></span>Format<br />as Table</BigTool>
      <Gallery aria-label="Cell styles"><SmallArrow left /><SmallArrow /></Gallery>
    </Group>
    <Group $w={83} $pad={4}>
      <BigTool $w={25}><span><InsertMark /><Drop /></span>Insert</BigTool>
      <BigTool $w={25}><span><InsertMark del /><Drop /></span>Delete</BigTool>
      <BigTool $w={25}><span><FormatMark /><Drop /></span>Format</BigTool>
    </Group>
    <Group $w={106}>
      <Stack>
        <LineTool><Sigma size={8} />Auto-sum<Drop /></LineTool>
        <LineTool><svg width="8" height="7" viewBox="0 0 16 14" fill="none" stroke="#444" strokeWidth="1.500"><path d="M1 1h14v12H1zM1 4h14" /><path d="M8 5v6M5 8l3 3 3-3" stroke="#3f7fc8" /></svg>Fill<Drop /></LineTool>
        <LineTool $h={9}><Eraser size={8} color="#8f5aa8" />Clear<Drop /></LineTool>
      </Stack>
      <BigTool $w={25} $dim><span><SortMark /><Drop /></span>Sort &amp;<br />Filter</BigTool>
      <BigTool $w={25}><span><svg width="15" height="15" viewBox="0 0 30 30" fill="none" stroke="#444" strokeWidth="1.800"><circle cx="18" cy="11" r="9" /><path d="M12 18L2 28" /></svg><Drop /></span>Find &amp;<br />Select</BigTool>
    </Group>
    <Group $w={38}><BigTool $w={27} $dim><span><SenseMark /><Drop /></span>Sensitivity</BigTool></Group>
    <Group $w={33}><BigTool $w={21} $dim><span><AnalyseMark /></span>Analyse<br />Data</BigTool></Group>
    <Group $w={60}><BigTool $w={36}><span><PdfMark /></span>Create PDF<br />and share link</BigTool></Group>
  </Ribbon>
);

const SheetGrid = () => {
  const rows = Array.from({ length: 37 }, (_, i) => i + 3);
  return (
    <SheetArea>
      <SheetClip>
        <Sheet>
          <colgroup><col width={11} />{sheetCols.map(([c, w]) => <col key={c} width={w} />)}</colgroup>
          <thead>
            <tr><ColHead aria-label="Select all" />{sheetCols.map(([c]) => <ColHead key={c} $sel={c === "G"}>{c}</ColHead>)}</tr>
          </thead>
          <tbody>
            <tr>
              <RowHead>1</RowHead>
              {sheetCols.map(([c]) => (
                <ShortCell key={c} $right={c === "C"} $fill={"PQR".includes(c) ? "sky" : undefined}>
                  {c === "B" ? "Version" : c === "C" ? "17" : c === "P" ? "Address" : ""}
                </ShortCell>
              ))}
            </tr>
            <tr><RowHead $bottom>2</RowHead>{heads.map(([t, f], i) => <HeadCell key={i} $fill={f}>{t}</HeadCell>)}</tr>
            {rows.map((n) => (
              <tr key={n}>
                <RowHead $sel={n === 7}>{n}</RowHead>
                {sheetCols.map(([c]) => {
                  if (c === "A") return <MarkCell key={c}>{n < 5 ? <OkMark /> : <BadMark />}</MarkCell>;
                  const v = people[n]?.[c];
                  return <Cell key={c} $sel={n === 7 && c === "G"}>{c === "D" && v ? <a href={`mailto:${v}`}>{v}</a> : v}</Cell>;
                })}
              </tr>
            ))}
          </tbody>
        </Sheet>
      </SheetClip>
      <VScroll />
    </SheetArea>
  );
};

const ExcelWindow = () => (
  <Excel>
    <TitleBar>
      <QuickTools>
        <Lights><Light aria-label="Close" $c="#e2574c" /><Light aria-label="Minimise" $c="#eeb03c" /><Light aria-label="Zoom" $c="#44b649" /></Lights>
        <AutoSave>AutoSave<input type="checkbox" defaultChecked /></AutoSave>
        <House size={10} strokeWidth={1.500} /><Save size={9} strokeWidth={2} /><Undo2 size={9} color="#aaa" /><Drop size={4} /><RotateCw size={9} color="#bbb" /><Ellipsis size={8} strokeWidth={3} />
      </QuickTools>
      <DocName><ExcelMark /><b>OPUSBulkUserImporterTemplate(v17)</b><Users size={7} />— Last Modified: 22 September<Drop /></DocName>
      <WindowTools><Search size={8} /><Users size={8} /></WindowTools>
    </TitleBar>
    <RibbonTabs>
      {["Home", "Insert", "Draw", "Page Layout", "Formulas", "Data", "Review", "View", "Automate", "Acrobat"].map((t, i) => <RibbonTab key={t} $on={i === 0}>{t}</RibbonTab>)}
      <TellMe><Lightbulb size={7} />Tell me</TellMe>
      <TabActions>
        <Pill><MessageSquare size={8} />Comments</Pill>
        <Pill $green><Share size={8} />Share<Drop /></Pill>
      </TabActions>
    </RibbonTabs>
    <ExcelRibbon />
    <FormulaBar>
      <NameBox><input aria-label="Name box" defaultValue="G7" /><svg width="4" height="8" viewBox="0 0 8 16" fill="#444"><path d="M1 6l3-4 3 4zM1 10l3 4 3-4z" /></svg></NameBox>
      <X size={8} /><Check size={8} /><i>fx</i>
      <FormulaInput aria-label="Formula" />
      <Caret />
    </FormulaBar>
    <SheetGrid />
    <HoverPointer><svg width="9" height="9" viewBox="0 0 18 18"><path d="M7 1h4v6h6v4h-6v6H7v-6H1V7h6z" fill="#fff" stroke="#333" strokeWidth="1.500" /></svg></HoverPointer>
    <HScroll />
    <SheetTabs>
      <SheetNav><Triangle left /><Triangle /></SheetNav>
      <SheetTab><LockMark size={6} />Users</SheetTab>
      <SheetTab $dark>Roles</SheetTab>
      <AddSheet aria-label="Add sheet"><Plus size={7} strokeWidth={3} /></AddSheet>
    </SheetTabs>
    <StatusBar>
      <span>Ready</span><PersonStanding size={8} />Accessibility: Investigate
      <ViewButtons>
        <button aria-label="Normal view"><svg width="8" height="8" viewBox="0 0 16 16" fill="none" stroke="currentColor" strokeWidth="1.500"><path d="M1 1h14v14H1zM1 6h14M1 11h14M6 1v14M11 1v14" /></svg></button>
        <button aria-label="Page layout view"><svg width="8" height="8" viewBox="0 0 16 16" fill="none" stroke="currentColor" strokeWidth="1.500"><path d="M1 1h14v14H1zM4 3h8v12H4zM6 6h4M6 9h4M6 12h4" /></svg></button>
        <button aria-label="Page break view"><svg width="8" height="8" viewBox="0 0 16 16" fill="none" stroke="currentColor" strokeWidth="1.500"><path d="M1 1h14v14H1zM1 9h14M8 1v8M11 1v8" /></svg></button>
      </ViewButtons>
      <Zoom>−<input type="range" aria-label="Zoom level" min={10} max={190} defaultValue={100} />+<output>100%</output></Zoom>
    </StatusBar>
  </Excel>
);

export default function App() {
  return (
    <Desktop>
      <Global />
      <MacMenu />
      <Browser>
        <BrowserChrome />
        <OpusApp />
      </Browser>
      <ExcelWindow />
    </Desktop>
  );
}
